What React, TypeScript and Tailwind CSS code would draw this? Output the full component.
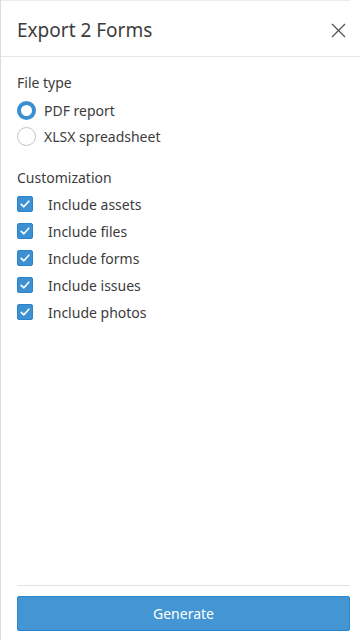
import React from "react";

const font = { fontFamily: '"Noto Sans", "Open Sans", sans-serif' };

function Check() {
  return (
    <span className="flex h-[16px] w-[16px] items-center justify-center rounded-[2px] bg-[#3d91d3] border border-[#2d83c7]">
      <svg width="12" height="12" viewBox="0 0 12 12" fill="none">
        <path d="M2.2 6.3 L4.9 8.8 L9.8 3.2" stroke="white" strokeWidth="1.6" strokeLinecap="round" strokeLinejoin="round" />
      </svg>
    </span>
  );
}

export default function App() {
  const items = ["Include assets", "Include files", "Include forms", "Include issues", "Include photos"];
  return (
    <div className="flex h-[640px] w-[360px] flex-col border-l border-[#dcdcdc] bg-white text-[#3c3c3c]" style={font}>
      <div className="mr-[10px] h-px bg-[#ececec]" />
      <div className="flex h-[56px] items-center justify-between border-b border-[#e6e6e6] pl-[16px] pr-[14px] pt-[3px]">
        <span className="text-[19px] leading-none">Export 2 Forms</span>
        <svg width="15" height="15" viewBox="0 0 15 15">
          <path d="M1 1 L14 14 M14 1 L1 14" stroke="#555" strokeWidth="1.3" />
        </svg>
      </div>
      <div className="flex flex-1 flex-col px-[16px] pt-[16px]">
        <div className="text-[14px] leading-[20px]">File type</div>
        <div className="mt-[7px] flex flex-col gap-[6px]">
          <div className="flex h-[20px] items-center gap-[8px]">
            <span className="h-[19px] w-[19px] rounded-full border-[4.5px] border-[#3b8fd1] bg-white" />
            <span className="text-[14px]">PDF report</span>
          </div>
          <div className="flex h-[20px] items-center gap-[8px]">
            <span className="h-[19px] w-[19px] rounded-full border border-[#c4c4c4] bg-white" />
            <span className="text-[14px]">XLSX spreadsheet</span>
          </div>
        </div>
        <div className="mt-[22px] text-[14px] leading-[20px]">Customization</div>
        <div className="mt-[8px] flex flex-col gap-[11px]">
          {items.map((t) => (
            <div key={t} className="flex h-[16px] items-center gap-[15px]">
              <Check />
              <span className="text-[14px]">{t}</span>
            </div>
          ))}
        </div>
      </div>
      <div className="mx-[16px] mr-[10px] border-t border-[#e3e3e3] pt-[10px] pb-[9px]">
        <button className="flex h-[35px] w-full items-center justify-center rounded-[2px] border border-[#2a84cb] bg-[#4396d3] text-[14px] text-white">
          Generate
        </button>
      </div>
    </div>
  );
}
